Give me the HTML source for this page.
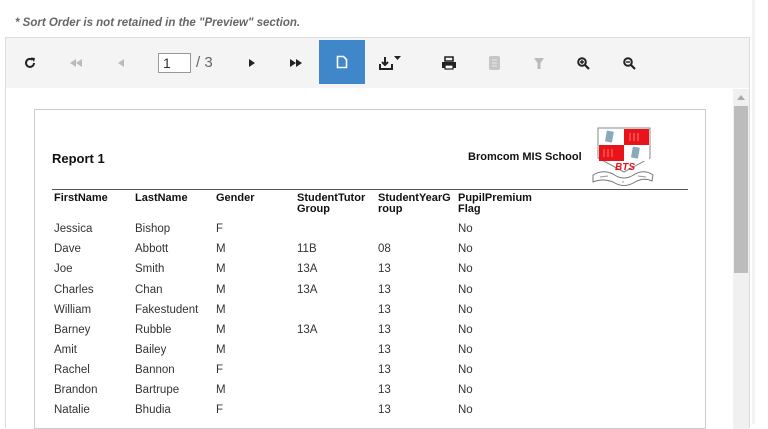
<!DOCTYPE html>
<html><head><meta charset="utf-8"><style>
*{margin:0;padding:0;box-sizing:border-box}
body{width:768px;height:424px;overflow:hidden;background:#fff;font-family:"Liberation Sans",Arial,sans-serif;position:relative}
.note{position:absolute;left:15px;top:17px;font-size:11.5px;font-style:italic;font-weight:bold;color:#666}
.tb{position:absolute;left:5px;top:37px;width:745px;height:52px;background:#f4f4f4;border:1px solid #ddd}
.ic{position:absolute;top:0;height:50px;display:flex;align-items:center;justify-content:center}
.view{position:absolute;left:5px;top:88px;width:745px;height:340px;border-left:1px solid #ddd;border-right:1px solid #ddd;background:#fff}
.sb{position:absolute;left:733px;top:89px;width:16px;height:340px;background:#f0f0f0}
.thumb{position:absolute;left:734px;top:106px;width:14px;height:167px;background:#bcbcbc}
.page{position:absolute;left:34px;top:109px;width:672px;height:320px;border:1px solid #ccc;background:#fff}
.t{position:absolute;font-size:11.5px;color:#333}
.h{position:absolute;font-size:11px;font-weight:bold;color:#111;line-height:11px}
</style></head><body>
<div class="note">* Sort Order is not retained in the "Preview" section.</div>
<div class="tb">
 <div class="ic" style="left:14px;width:20px"><svg width="14" height="14" viewBox="0 0 14 14"><path d="M11 7a4 4 0 1 1-1.5-3.2" fill="none" stroke="#222" stroke-width="2"/><path d="M8 1.5l4 .5-1 4z" fill="#222"/></svg></div>
 <div class="ic" style="left:60px;width:20px"><svg width="12" height="8"><path d="M6 0v8L0 4zM12 0v8L6 4z" fill="#bbb"/></svg></div>
 <div class="ic" style="left:108px;width:14px"><svg width="6" height="8"><path d="M6 0v8L0 4z" fill="#bbb"/></svg></div>
 <div style="position:absolute;left:152px;top:15px;width:33px;height:20px;border:1px solid #999;background:#fff;font-size:14px;color:#333;padding-left:4px;line-height:18px">1</div>
 <div style="position:absolute;left:190px;top:16px;font-size:15px;color:#666">/ 3</div>
 <div class="ic" style="left:239px;width:14px"><svg width="6" height="8"><path d="M0 0v8l6-4z" fill="#222"/></svg></div>
 <div class="ic" style="left:282px;width:16px"><svg width="12" height="8"><path d="M0 0v8l6-4zM6 0v8l6-4z" fill="#222"/></svg></div>
 <div class="ic" style="left:313px;width:46px;top:2px;height:44px;background:#3f87c9"><svg width="12" height="14"><path d="M1.5 1.5h6l3 3v8h-9z" fill="none" stroke="#fff" stroke-width="1.6"/></svg></div>
 <div class="ic" style="left:370px;width:30px"><svg width="24" height="16"><path d="M6 2v8M3 7l3 3 3-3" fill="none" stroke="#222" stroke-width="2"/><path d="M1 9v5h12v-5" fill="none" stroke="#222" stroke-width="2"/><path d="M15 1h7l-3.5 4z" fill="#222"/></svg></div>
 <div class="ic" style="left:433px;width:20px"><svg width="16" height="14"><path d="M4 1h8v4H4z" fill="none" stroke="#222" stroke-width="1.6"/><path d="M1 6h14v6H1z" fill="#222"/><path d="M4 9h8v4H4z" fill="#fff" stroke="#222" stroke-width="1.2"/></svg></div>
 <div class="ic" style="left:480px;width:16px"><svg width="11" height="14"><rect x="0" y="0" width="11" height="14" rx="2" fill="#c6c6c6"/><path d="M3 4h5M3 7h5M3 10h5" stroke="#e8e8e8"/></svg></div>
 <div class="ic" style="left:525px;width:16px"><svg width="10" height="11"><path d="M0 0h10L6.5 5v6h-3V5z" fill="#bbb"/></svg></div>
 <div class="ic" style="left:569px;width:16px"><svg width="13" height="13"><circle cx="5" cy="5" r="3.8" fill="none" stroke="#222" stroke-width="2"/><path d="M3 5h4M5 3v4" stroke="#222" stroke-width="1.4"/><path d="M8 8l4 4" stroke="#222" stroke-width="2.2"/></svg></div>
 <div class="ic" style="left:615px;width:16px"><svg width="13" height="13"><circle cx="5" cy="5" r="3.8" fill="none" stroke="#222" stroke-width="2"/><path d="M3 5h4" stroke="#222" stroke-width="1.4"/><path d="M8 8l4 4" stroke="#222" stroke-width="2.2"/></svg></div>
</div>
<div class="view"></div>
<div style="position:absolute;left:752px;top:0;width:3px;height:424px;background:#f2f2f2"></div>
<div class="sb"></div><div class="thumb"></div>
<svg style="position:absolute;left:737px;top:95px" width="8" height="5"><path d="M0 5L4 0l4 5z" fill="#aaa"/></svg>
<div class="page"></div>
<div style="position:absolute;left:52px;top:151px;font-size:13px;font-weight:bold;color:#111">Report 1</div>
<div style="position:absolute;left:468px;top:151px;font-size:11px;font-weight:bold;color:#111">Bromcom MIS School</div>
<svg style="position:absolute;left:590px;top:127px" width="66" height="60" viewBox="0 0 66 60">
<path d="M8 1h52v30l-26 14L8 31z" fill="#fff" stroke="#888"/>
<rect x="9" y="2" width="25" height="16" fill="#fff"/><rect x="34" y="2" width="25" height="16" fill="#e8141a"/>
<rect x="9" y="18" width="25" height="16" fill="#e8141a"/><rect x="34" y="18" width="25" height="16" fill="#fff"/>
<rect x="16" y="4" width="7" height="11" fill="#8ab" transform="rotate(10 19 9)"/><rect x="42" y="20" width="7" height="11" fill="#8ab" transform="rotate(10 45 25)"/>
<path d="M40 6v8M44 6v8M48 6v8M14 22v8M18 22v8M22 22v8" stroke="#f77" stroke-width="1"/>
<text x="25" y="43" font-family="Liberation Sans" font-size="10" font-weight="bold" font-style="italic" fill="#e8141a">BTS</text>
<path d="M3 48q10-6 20-1q11 8 22 0q10-5 18 1l-1 6q-8-4-17 1q-11 7-22 0q-10-4-20 0z" fill="#fff" stroke="#777"/>
<path d="M10 50l8-1M48 49l8 1M32 55h2" stroke="#999"/>
</svg>
<div style="position:absolute;left:52px;top:189px;width:636px;height:1px;background:#555"></div>
<div class="h" style="left:54px;top:193px">FirstName</div>
<div class="h" style="left:135px;top:193px">LastName</div>
<div class="h" style="left:216px;top:193px">Gender</div>
<div class="h" style="left:297px;top:193px">StudentTutor<br>Group</div>
<div class="h" style="left:378px;top:193px">StudentYearG<br>roup</div>
<div class="h" style="left:458px;top:193px">PupilPremium<br>Flag</div>
<div class="t" style="left:54px;top:223px">Jessica</div><div class="t" style="left:135px;top:223px">Bishop</div><div class="t" style="left:216px;top:223px">F</div><div class="t" style="left:458px;top:223px">No</div>
<div class="t" style="left:54px;top:243px">Dave</div><div class="t" style="left:135px;top:243px">Abbott</div><div class="t" style="left:216px;top:243px">M</div><div class="t" style="left:297px;top:243px">11B</div><div class="t" style="left:378px;top:243px">08</div><div class="t" style="left:458px;top:243px">No</div>
<div class="t" style="left:54px;top:263px">Joe</div><div class="t" style="left:135px;top:263px">Smith</div><div class="t" style="left:216px;top:263px">M</div><div class="t" style="left:297px;top:263px">13A</div><div class="t" style="left:378px;top:263px">13</div><div class="t" style="left:458px;top:263px">No</div>
<div class="t" style="left:54px;top:284px">Charles</div><div class="t" style="left:135px;top:284px">Chan</div><div class="t" style="left:216px;top:284px">M</div><div class="t" style="left:297px;top:284px">13A</div><div class="t" style="left:378px;top:284px">13</div><div class="t" style="left:458px;top:284px">No</div>
<div class="t" style="left:54px;top:304px">William</div><div class="t" style="left:135px;top:304px">Fakestudent</div><div class="t" style="left:216px;top:304px">M</div><div class="t" style="left:378px;top:304px">13</div><div class="t" style="left:458px;top:304px">No</div>
<div class="t" style="left:54px;top:324px">Barney</div><div class="t" style="left:135px;top:324px">Rubble</div><div class="t" style="left:216px;top:324px">M</div><div class="t" style="left:297px;top:324px">13A</div><div class="t" style="left:378px;top:324px">13</div><div class="t" style="left:458px;top:324px">No</div>
<div class="t" style="left:54px;top:344px">Amit</div><div class="t" style="left:135px;top:344px">Bailey</div><div class="t" style="left:216px;top:344px">M</div><div class="t" style="left:378px;top:344px">13</div><div class="t" style="left:458px;top:344px">No</div>
<div class="t" style="left:54px;top:364px">Rachel</div><div class="t" style="left:135px;top:364px">Bannon</div><div class="t" style="left:216px;top:364px">F</div><div class="t" style="left:378px;top:364px">13</div><div class="t" style="left:458px;top:364px">No</div>
<div class="t" style="left:54px;top:384px">Brandon</div><div class="t" style="left:135px;top:384px">Bartrupe</div><div class="t" style="left:216px;top:384px">M</div><div class="t" style="left:378px;top:384px">13</div><div class="t" style="left:458px;top:384px">No</div>
<div class="t" style="left:54px;top:404px">Natalie</div><div class="t" style="left:135px;top:404px">Bhudia</div><div class="t" style="left:216px;top:404px">F</div><div class="t" style="left:378px;top:404px">13</div><div class="t" style="left:458px;top:404px">No</div>
</body></html>
